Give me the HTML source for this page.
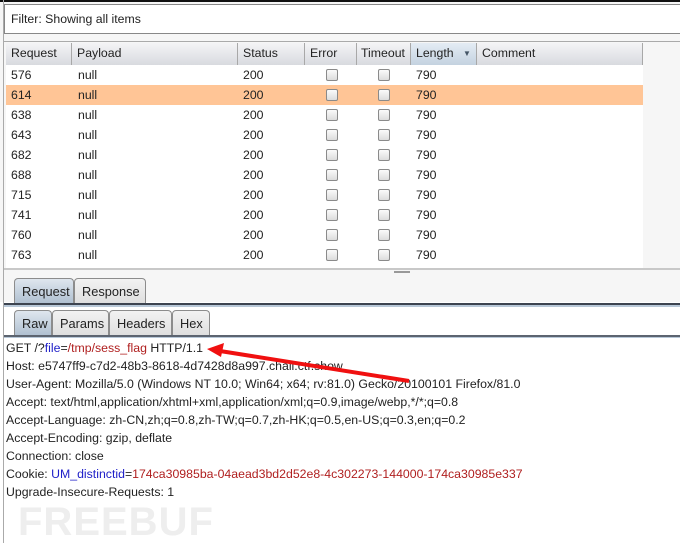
<!DOCTYPE html>
<html><head><style>
*{margin:0;padding:0;box-sizing:border-box}
body{width:680px;height:543px;overflow:hidden;background:#fff;font-family:"Liberation Sans",Arial,sans-serif;font-size:12px;color:#222;position:relative}
.a{position:absolute}
.cb{position:absolute;width:12px;height:12px;border:1px solid #8a8a8a;border-radius:2px;background:linear-gradient(#fafafa,#dcdcdc)}
.hd{position:absolute;top:43px;height:22px;border-right:1px solid #a8a8a8;padding-left:5px;line-height:21px;background:linear-gradient(#f4f4f6,#d8dadf);font-size:12.3px}
.row{position:absolute;left:6px;width:637px;height:20px;line-height:21px;font-size:12.3px}
.row span{position:absolute}
.tab{position:absolute;height:26px;border:1px solid #8c8c8c;border-bottom:none;border-radius:4px 4px 0 0;background:linear-gradient(#f2f2f2,#dedede);padding:0 7px;line-height:25px;font-size:12.8px}
.tab.on{background:linear-gradient(#dfe6ee,#aebfd0)}
.ln{position:absolute;left:6px;font-size:12.3px;white-space:nowrap}
.b{color:#2020c8}.r{color:#b02020}
</style></head><body>
<div class="a" style="left:0;top:0;width:680px;height:2px;background:#111"></div>
<div class="a" style="left:0;top:2px;width:680px;height:300px;background:#f6f6f6"></div>
<div class="a" style="left:4px;top:4px;width:680px;height:30px;border:1px solid #888;background:#fff;padding-left:6px;line-height:28px;font-size:12.3px">Filter: Showing all items</div>
<div class="a" style="left:4px;top:41px;width:676px;height:1px;background:#aaa"></div>
<div class="a" style="left:6px;top:43px;width:637px;height:225px;background:#fff"></div>
<div class="hd" style="left:6px;width:66px">Request</div>
<div class="hd" style="left:72px;width:166px">Payload</div>
<div class="hd" style="left:238px;width:67px">Status</div>
<div class="hd" style="left:305px;width:52px">Error</div>
<div class="hd" style="left:357px;width:54px;padding-left:4px">Timeout</div>
<div class="hd" style="left:411px;width:66px;background:linear-gradient(#e4ecf4,#c4d2e0)">Length<span style="position:absolute;left:52px;font-size:8px;color:#456">▼</span></div>
<div class="hd" style="left:477px;width:166px">Comment</div>
<div id="rows"></div>
<script>
var ids=[576,614,638,643,682,688,715,741,760,763],h='';
ids.forEach(function(n,i){var t=65+i*20;
h+='<div class="row" style="top:'+t+'px;'+(n==614?'background:#ffc596':'')+'"><span style="left:5px">'+n+'</span><span style="left:72px">null</span><span style="left:237px">200</span><span style="left:410px">790</span></div><div class="cb" style="left:326px;top:'+(t+4)+'px"></div><div class="cb" style="left:378px;top:'+(t+4)+'px"></div>';});
document.getElementById('rows').innerHTML=h;
</script>
<div class="a" style="left:4px;top:268px;width:676px;height:2px;background:#c8c8c8"></div>
<div class="a" style="left:394px;top:271px;width:16px;height:2px;background:#999"></div>
<div class="tab on" style="left:14px;top:278px;width:60px">Request</div>
<div class="tab" style="left:74px;top:278px;width:72px">Response</div>
<div class="a" style="left:4px;top:303px;width:676px;height:2px;background:#3d4450"></div>
<div class="a" style="left:4px;top:305px;width:676px;height:2px;background:#b8c8d8"></div>
<div class="tab on" style="left:14px;top:310px;width:38px">Raw</div>
<div class="tab" style="left:52px;top:310px;width:57px">Params</div>
<div class="tab" style="left:109px;top:310px;width:63px">Headers</div>
<div class="tab" style="left:172px;top:310px;width:38px">Hex</div>
<div class="a" style="left:4px;top:335px;width:676px;height:2px;background:#5c6470"></div>
<div class="a" style="left:4px;top:337px;width:676px;height:1px;background:#b8c8d8"></div>
<div class="a" style="left:3px;top:0;width:1px;height:543px;background:#aaa"></div>
<div class="ln" style="top:341px">GET /?<span class="b">file</span>=<span class="r">/tmp/sess_flag</span> HTTP/1.1</div>
<div class="ln" style="top:359px">Host: e5747ff9-c7d2-48b3-8618-4d7428d8a997.chall.ctf.show</div>
<div class="ln" style="top:377px">User-Agent: Mozilla/5.0 (Windows NT 10.0; Win64; x64; rv:81.0) Gecko/20100101 Firefox/81.0</div>
<div class="ln" style="top:395px">Accept: text/html,application/xhtml+xml,application/xml;q=0.9,image/webp,*/*;q=0.8</div>
<div class="ln" style="top:413px">Accept-Language: zh-CN,zh;q=0.8,zh-TW;q=0.7,zh-HK;q=0.5,en-US;q=0.3,en;q=0.2</div>
<div class="ln" style="top:431px">Accept-Encoding: gzip, deflate</div>
<div class="ln" style="top:449px">Connection: close</div>
<div class="ln" style="top:467px">Cookie: <span class="b">UM_distinctid</span>=<span class="r">174ca30985ba-04aead3bd2d52e8-4c302273-144000-174ca30985e337</span></div>
<div class="ln" style="top:485px">Upgrade-Insecure-Requests: 1</div>
<div class="a" style="left:18px;top:500px;font-size:40px;font-weight:bold;color:#eeeeee;letter-spacing:1px">FREEBUF</div>
<svg class="a" style="left:0;top:0" width="680" height="543"><line x1="220" y1="351" x2="409" y2="381" stroke="#f01010" stroke-width="4"/><polygon points="207,349 224,343 221,357" fill="#f01010"/></svg>
</body></html>
